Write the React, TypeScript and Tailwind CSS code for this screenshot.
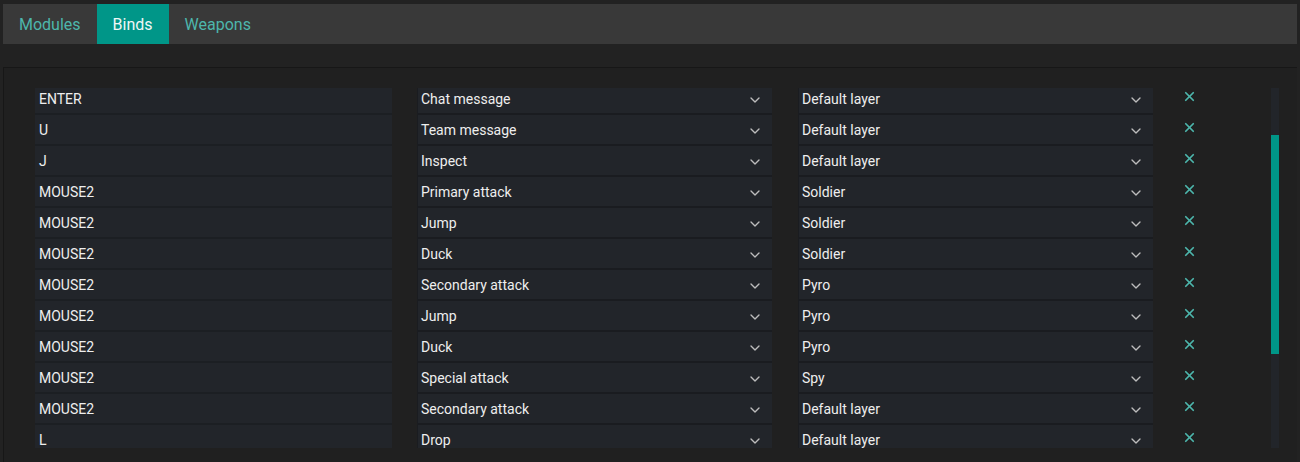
import { ChevronDown, X } from 'lucide-react';

const binds = [
  { key: 'ENTER', action: 'Chat message', layer: 'Default layer' },
  { key: 'U', action: 'Team message', layer: 'Default layer' },
  { key: 'J', action: 'Inspect', layer: 'Default layer' },
  { key: 'MOUSE2', action: 'Primary attack', layer: 'Soldier' },
  { key: 'MOUSE2', action: 'Jump', layer: 'Soldier' },
  { key: 'MOUSE2', action: 'Duck', layer: 'Soldier' },
  { key: 'MOUSE2', action: 'Secondary attack', layer: 'Pyro' },
  { key: 'MOUSE2', action: 'Jump', layer: 'Pyro' },
  { key: 'MOUSE2', action: 'Duck', layer: 'Pyro' },
  { key: 'MOUSE2', action: 'Special attack', layer: 'Spy' },
  { key: 'MOUSE2', action: 'Secondary attack', layer: 'Default layer' },
  { key: 'L', action: 'Drop', layer: 'Default layer' },
];

const tabs = ['Modules', 'Binds', 'Weapons'];

function Select({ value }: { value: string }) {
  return (
    <div className="flex h-[31px] w-[355px] items-center justify-between border-b-2 border-l border-[#1a1c20] bg-[#22252a] pl-[3px] pr-[9px] pt-[2px]">
      <span>{value}</span>
      <ChevronDown className="h-[16px] w-[16px] text-[#bdbdbd]" strokeWidth={2} />
    </div>
  );
}

export default function App() {
  return (
    <div
      className="h-[462px] overflow-hidden bg-[#222222] px-[3px] pt-[4px] text-[14px] text-[#eeeeee]"
      style={{ fontFamily: 'Roboto, "Noto Sans", sans-serif' }}
    >
      {/* Tabs */}
      <div className="flex h-[40px] bg-[#393939] text-[16px]">
        {tabs.map((t) => (
          <div
            key={t}
            className={
              t === 'Binds'
                ? 'flex items-center bg-[#009688] px-[16px] pt-[2px] text-[#eef7f6]'
                : 'flex items-center px-[16px] pt-[2px] text-[#4db6ac]'
            }
          >
            {t}
          </div>
        ))}
      </div>

      {/* Binds panel */}
      <div className="mt-[23px] flex h-[395px] border-l border-t border-[#171717] bg-[#202020] pl-[31px] pr-[18px] pt-[20px]">
        <div className="h-[360px] flex-1 overflow-hidden">
          <div className="-mt-[4px]">
            {binds.map((b, i) => (
              <div key={i} className="flex items-center">
                <div className="flex h-[31px] w-[357px] items-center border-b-2 border-[#1c1f23] bg-[#22252a] pl-[4px] pt-[2px]">
                  {b.key}
                </div>
                <div className="ml-[25px]">
                  <Select value={b.action} />
                </div>
                <div className="ml-[26px]">
                  <Select value={b.layer} />
                </div>
                <div className="flex w-[72px] justify-center pb-[6px]">
                  <X className="h-[15px] w-[15px] text-[#4db6ac]" strokeWidth={2.8} />
                </div>
              </div>
            ))}
          </div>
        </div>
        {/* Scrollbar */}
        <div className="h-[360px] w-[8px] bg-[#22252a] pt-[47px]">
          <div className="h-[219px] w-full bg-[#009688]" />
        </div>
      </div>
    </div>
  );
}
